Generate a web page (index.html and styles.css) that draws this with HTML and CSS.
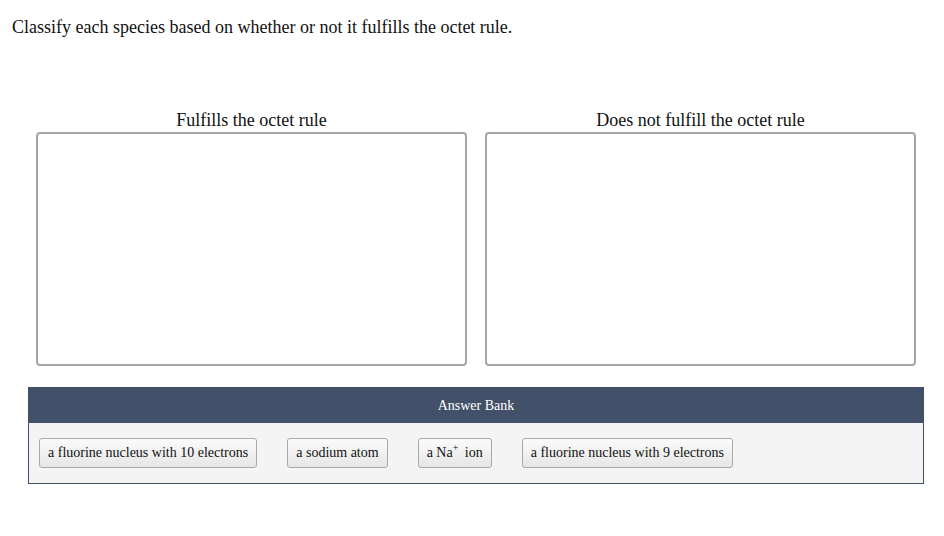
FILE: index.html
```html
<!DOCTYPE html>
<html>
<head>
<meta charset="utf-8">
<link rel="stylesheet" href="styles.css">
</head>
<body>
<div class="page">
  <p class="prompt">Classify each species based on whether or not it fulfills the octet rule.</p>
  <div class="sorter">
    <div class="bins">
      <div class="bin">
        <div class="bin-title">Fulfills the octet rule</div>
        <div class="bin-box"></div>
      </div>
      <div class="bin">
        <div class="bin-title">Does not fulfill the octet rule</div>
        <div class="bin-box"></div>
      </div>
    </div>
    <div class="bank">
      <div class="bank-head">Answer Bank</div>
      <div class="bank-body">
        <div class="chip">a fluorine nucleus with 10 electrons</div>
        <div class="chip">a sodium atom</div>
        <div class="chip">a Na<sup>+</sup> ion</div>
        <div class="chip">a fluorine nucleus with 9 electrons</div>
      </div>
    </div>
  </div>
</div>
</body>
</html>
```

FILE: styles.css
```css
html, body {
  margin: 0;
  padding: 0;
  background: #ffffff;
}
body {
  font-family: "Liberation Serif", "Times New Roman", serif;
  color: #111111;
  width: 944px;
  height: 536px;
  overflow: hidden;
}
.page {
  padding: 17px 20px 0 28px;
}
.prompt {
  margin: 0 0 0 -16px;
  font-size: 18px;
  line-height: 20px;
}
.sorter {
  margin-top: 73px;
  display: flex;
  flex-direction: column;
}
.bins {
  display: flex;
  gap: 18px;
  padding: 0 8px;
}
.bin {
  flex: 1;
  display: flex;
  flex-direction: column;
}
.bin-title {
  text-align: center;
  font-size: 18px;
  line-height: 20px;
  height: 22px;
}
.bin-box {
  height: 230px;
  border: 2px solid #a6a6a6;
  border-radius: 4px;
  background: #ffffff;
}
.bank {
  margin-top: 21px;
  border: 1px solid #435069;
}
.bank-head {
  height: 35px;
  background: #435069;
  color: #ffffff;
  font-size: 14px;
  display: flex;
  align-items: center;
  justify-content: center;
}
.bank-body {
  background: #f4f4f4;
  display: flex;
  gap: 30px;
  padding: 15px 10px 15px;
  align-items: center;
}
.chip {
  height: 28px;
  padding: 0 8px;
  border: 1px solid #a9a9a9;
  border-radius: 3px;
  background: linear-gradient(#fbfbfb, #e6e6e6);
  font-size: 14px;
  line-height: 28px;
  color: #111111;
  white-space: nowrap;
}
.chip sup {
  font-size: 10px;
  line-height: 0;
  vertical-align: 6px;
  margin-right: 3px;
}
```
